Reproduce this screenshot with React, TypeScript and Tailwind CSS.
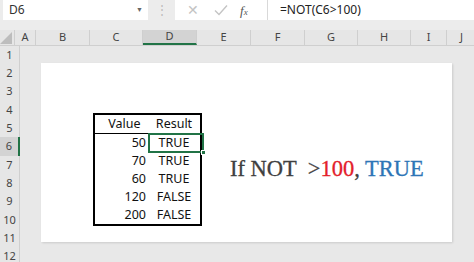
import React from 'react';

// Column widths (px) of the sheet: row header, then A..J
const COLS = [
  { key: 'A', w: 21 },
  { key: 'B', w: 54 },
  { key: 'C', w: 53 },
  { key: 'D', w: 54 },
  { key: 'E', w: 54 },
  { key: 'F', w: 54 },
  { key: 'G', w: 53 },
  { key: 'H', w: 53 },
  { key: 'I', w: 36 },
  { key: 'J', w: 30 },
];

const ROWS = [1, 2, 3, 4, 5, 6, 7, 8, 9, 10, 11, 12];

const DATA = [
  { value: 50, result: 'TRUE' },
  { value: 70, result: 'TRUE' },
  { value: 60, result: 'TRUE' },
  { value: 120, result: 'FALSE' },
  { value: 200, result: 'FALSE' },
];

const uiFont = { fontFamily: '"Noto Sans", "Liberation Sans", sans-serif' };

export default function App() {
  return (
    <div className="w-[474px] h-[262px] overflow-hidden bg-[#e6e6e6] text-[#333]" style={uiFont}>
      {/* ── Barra de fórmulas ── */}
      <div className="h-[30px] flex items-start bg-[#ececec]">
        <div className="ml-[3px] w-[145px] h-[20px] bg-white flex items-center justify-between pl-[6px] pr-[5px] text-[12px] text-[#333]">
          <span>D6</span>
          <span className="text-[7px] text-[#666]">▼</span>
        </div>
        <div className="w-[27px] h-[20px] flex items-center justify-center text-[12px] text-[#bbb] leading-none">⋮</div>
        <div className="flex-1 h-[20px] bg-white flex items-center">
          <div className="w-[92px] h-full flex items-center">
            <span className="ml-[12px] text-[14px] text-[#c4c4c4] leading-none">✕</span>
            <svg className="ml-[15px]" width="14" height="12" viewBox="0 0 14 12">
              <path d="M1 6.5 L5 10.5 L13 1.5" fill="none" stroke="#c4c4c4" strokeWidth="1.4" />
            </svg>
            <span
              className="ml-[12px] text-[13px] italic text-[#555] leading-none"
              style={{ fontFamily: '"Liberation Serif", serif' }}
            >
              f<span className="text-[9px]">x</span>
            </span>
          </div>
          <div className="h-full border-l border-[#d9d9d9] pl-[12px] flex items-center text-[12px] text-[#222]">
            =NOT(C6&gt;100)
          </div>
        </div>
      </div>

      {/* ── Cabecera de columnas ── */}
      <div className="h-[16px] flex bg-[#e6e6e6] border-b border-[#cfcfcf] text-[11px] text-[#444]">
        <div className="w-[20px] h-full border-r border-[#cfcfcf] flex items-end justify-end pr-[2px] pb-[1px]">
          <svg width="12" height="12" viewBox="0 0 12 12">
            <path d="M12 0 L12 12 L0 12 Z" fill="#bdbdbd" />
          </svg>
        </div>
        {COLS.map((c) => (
          <div
            key={c.key}
            className={`h-full flex items-center justify-center border-r border-[#cfcfcf] shrink-0 ${
              c.key === 'D' ? 'bg-[#d3d3d3] border-b-2 border-b-[#217346]' : ''
            }`}
            style={{ width: c.w }}
          >
            {c.key}
          </div>
        ))}
      </div>

      {/* ── Cuadrícula ── */}
      <div className="relative flex">
        <div className="w-[20px] shrink-0 border-r border-[#cfcfcf] bg-[#e6e6e6]">
          {ROWS.map((r) => (
            <div
              key={r}
              className={`h-[18.3px] flex items-center justify-center text-[11px] text-[#444] ${
                r === 6 ? 'bg-[#d3d3d3] border-r-2 border-[#217346] -mr-px' : ''
              }`}
            >
              {r}
            </div>
          ))}
        </div>
        <div className="flex-1 bg-[#e8e8e8]" />

        {/* Imagen pegada sobre la hoja */}
        <div className="absolute left-[41px] top-[17px] w-[411px] h-[179px] bg-white shadow-[1px_1px_2px_rgba(0,0,0,0.12)] flex items-start">
          {/* Tabla Value / Result */}
          <div className="relative ml-[52px] mt-[50px] w-[109px] border-2 border-black text-[12.5px] text-[#111]">
            <div className="h-[19px] flex items-center border-b border-black">
              <span className="w-[53px] text-center pl-[6px]">Value</span>
              <span className="flex-1 text-center">Result</span>
            </div>
            {DATA.map((d) => (
              <div key={d.value} className="h-[18px] flex items-center">
                <span className="w-[51px] text-right">{d.value}</span>
                <span className="flex-1 text-center pl-[2px]">{d.result}</span>
              </div>
            ))}
            {/* Celda activa D6 */}
            <div className="absolute left-[53px] top-[18px] w-[56px] h-[20px] border-2 border-[#217346]">
              <span className="absolute -right-[4px] -bottom-[4px] w-[5px] h-[5px] bg-[#217346] border border-white" />
            </div>
          </div>

          {/* Texto explicativo */}
          <div
            className="ml-[28px] mt-[95px] text-[22.5px] leading-none whitespace-pre text-[#404040] [-webkit-text-stroke:0.3px]"
            style={{ fontFamily: '"Liberation Serif", serif' }}
          >
            If NOT  &gt;<span className="text-[#e3202a]">100</span>, <span className="text-[#2e75b6]">TRUE</span>
          </div>
        </div>
      </div>
    </div>
  );
}
